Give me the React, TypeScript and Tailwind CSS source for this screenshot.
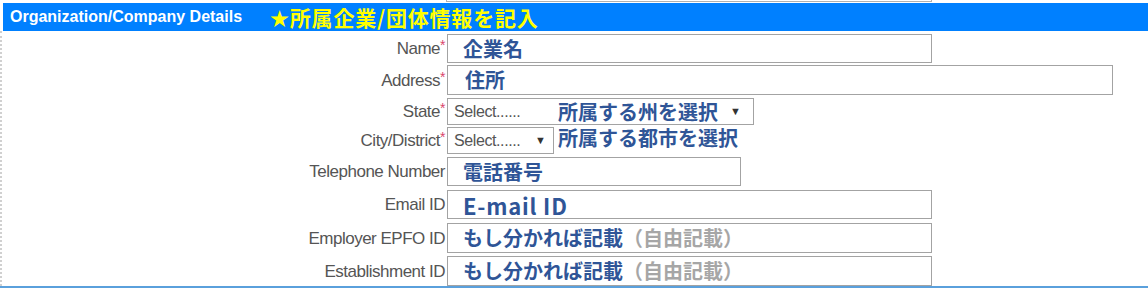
import React from 'react';

const JP = "font-['Noto_Sans_CJK_JP','Noto_Sans',sans-serif]";

function Label({ text, req }: { text: string; req?: boolean }) {
  return (
    <div className="w-[445px] shrink-0 pr-[2px] text-right text-[17px] text-[#555] tracking-[-0.5px] leading-none">
      {text}
      {req && <span className="relative -top-[4px] text-[14px] text-[#d9466b]">*</span>}
    </div>
  );
}

function Box({ w, h, children, pl = 'pl-[15px]' }: { w: string; h: string; children?: React.ReactNode; pl?: string }) {
  return (
    <div className={`${w} ${h} ${pl} flex items-center border border-[#a3a3a3] bg-white`}>
      {children}
    </div>
  );
}

function Jp({ children, gray }: { children: React.ReactNode; gray?: boolean }) {
  return (
    <span className={`${JP} text-[20px] font-bold leading-none ${gray ? 'text-[#a6a6a6]' : 'text-[#2f5597]'}`}>
      {children}
    </span>
  );
}

export default function App() {
  return (
    <div className="w-[1148px] h-[288px] bg-white overflow-hidden font-['Liberation_Sans',Arial,sans-serif]">
      {/* tail of the field above */}
      <div className="h-[3px] pl-[446px]">
        <div className="w-[486px] h-[2px] border-b border-x border-[#b0b0b0]" />
      </div>

      {/* section header */}
      <div className="ml-[3px] h-[28px] bg-[#0080ff] flex items-center">
        <span className="pl-[7px] w-[267px] text-[16px] font-bold text-white tracking-[0px]">
          Organization/Company Details
        </span>
        <span className={`${JP} text-[21px] font-bold text-[#ffff00] leading-none tracking-[0.8px]`}>
          <span className="text-[19px]">★</span>所属企業/団体情報を記入
        </span>
      </div>

      <div className="border-l-2 border-dotted border-[#d0d0d0] h-[255px] flex flex-col">
        <div className="mt-[3px] flex items-center">
          <Label text="Name" req />
          <Box w="w-[485px]" h="h-[29px]"><Jp>企業名</Jp></Box>
        </div>

        <div className="mt-[2px] flex items-center">
          <Label text="Address" req />
          <Box w="w-[666px]" h="h-[30px]" pl="pl-[17px]"><Jp>住所</Jp></Box>
        </div>

        <div className="mt-[3px] flex items-center">
          <Label text="State" req />
          <Box w="w-[307px]" h="h-[27px]" pl="pl-[6px]">
            <span className="w-[104px] text-[16px] text-[#555] tracking-[-0.4px]">Select......</span>
            <Jp>所属する州を選択</Jp>
            <span className="ml-[12px] text-[11px] text-[#333]">▼</span>
          </Box>
        </div>

        <div className="mt-[2px] flex items-center">
          <Label text="City/District" req />
          <Box w="w-[107px]" h="h-[27px]" pl="pl-[6px]">
            <span className="w-[81px] text-[16px] text-[#555] tracking-[-0.4px]">Select......</span>
            <span className="text-[11px] text-[#333]">▼</span>
          </Box>
          <span className="ml-[4px]"><Jp>所属する都市を選択</Jp></span>
        </div>

        <div className="mt-[3px] flex items-center">
          <Label text="Telephone Number" />
          <Box w="w-[294px]" h="h-[29px]" pl="pl-[15px]"><Jp>電話番号</Jp></Box>
        </div>

        <div className="mt-[4px] flex items-center">
          <Label text="Email ID" />
          <Box w="w-[485px]" h="h-[29px]">
            <span className={`${JP} text-[22px] font-bold leading-none text-[#2f5597] tracking-[0.8px]`}>E-mail ID</span>
          </Box>
        </div>

        <div className="mt-[4px] flex items-center">
          <Label text="Employer EPFO ID" />
          <Box w="w-[485px]" h="h-[30px]">
            <Jp>もし分かれば記載</Jp><Jp gray>（自由記載）</Jp>
          </Box>
        </div>

        <div className="mt-[3px] flex items-center">
          <Label text="Establishment ID" />
          <Box w="w-[485px]" h="h-[30px]">
            <Jp>もし分かれば記載</Jp><Jp gray>（自由記載）</Jp>
          </Box>
        </div>
      </div>

      <div className="h-[2px] bg-[#5aa0dc]" />
    </div>
  );
}
